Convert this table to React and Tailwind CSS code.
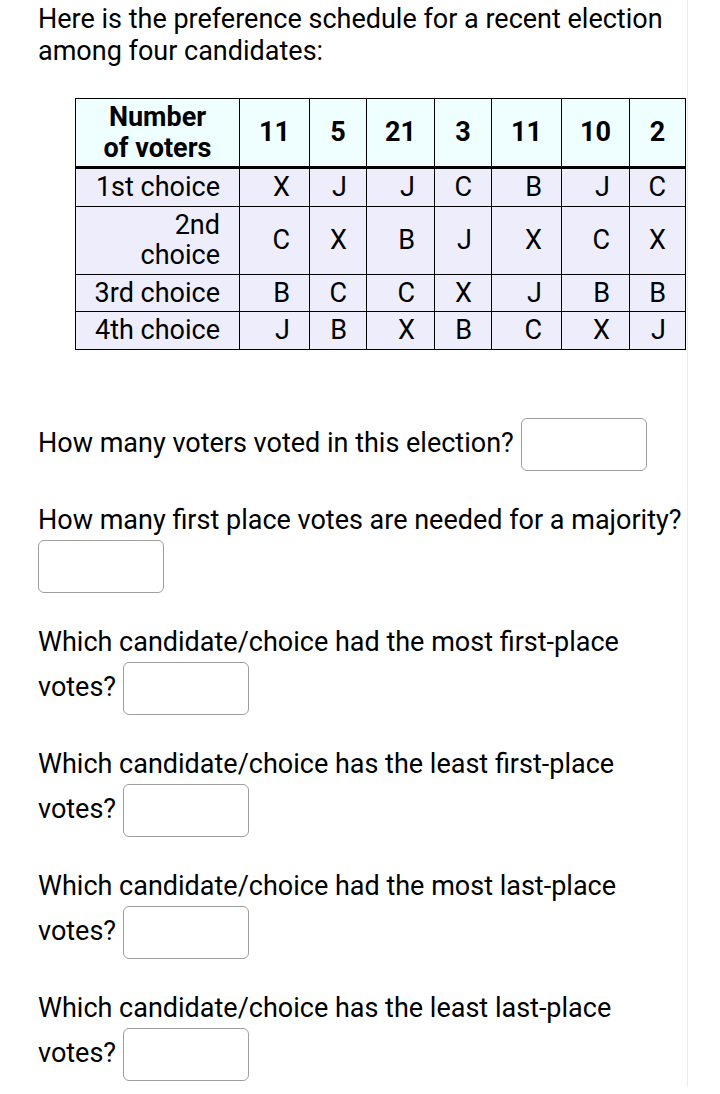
const header = ["11", "5", "21", "3", "11", "10", "2"]
const widths = ["w-[70px]", "w-[57px]", "w-[68px]", "w-[57px]", "w-[70px]", "w-[68px]", "w-[56px]"]

const rows = [
  { label: "1st choice", cells: ["X", "J", "J", "C", "B", "J", "C"] },
  { label: "2nd choice", wrap: true, cells: ["C", "X", "B", "J", "X", "C", "X"] },
  { label: "3rd choice", cells: ["B", "C", "C", "X", "J", "B", "B"] },
  { label: "4th choice", cells: ["J", "B", "X", "B", "C", "X", "J"] },
]

function AnswerBox() {
  return (
    <input
      type="text"
      className="inline-block align-middle w-[126px] h-[53px] my-1 border border-[#9e9e9e] rounded-[6px] bg-white"
    />
  )
}

function Question({ children, className = "" }) {
  return (
    <p className={`leading-[32px] ${className}`}>
      {children} <AnswerBox />
    </p>
  )
}

export default function App() {
  return (
    <div
      className="w-[688px] border-r border-[#ececec] pl-[38px] pb-[2px] text-[27px] text-black bg-white"
      style={{ fontFamily: "Roboto, 'Noto Sans', sans-serif" }}
    >
      <p className="pt-[3px] leading-[32px]">
        Here is the preference schedule for a recent election among four candidates:
      </p>

      {/* Preference schedule */}
      <table className="mt-[31px] ml-[37px] border-collapse table-fixed w-[611px] leading-[30.5px]">
        <thead>
          <tr className="bg-[#effefe]">
            <th className="w-[164px] border border-black border-b-[3px] px-1 py-[3px] text-center font-bold">
              Number
              <br />
              of voters
            </th>
            {header.map((n, i) => (
              <th
                key={i}
                className={`${widths[i]} border border-black border-b-[3px] py-[3px] text-center font-bold`}
              >
                {n}
              </th>
            ))}
          </tr>
        </thead>
        <tbody>
          {rows.map((row) => (
            <tr key={row.label} className="bg-[#ededfb]">
              <td className="border border-black pr-[19px] py-[3px] text-right align-middle whitespace-nowrap">
                {row.wrap ? (
                  <>
                    2nd
                    <br />
                    choice
                  </>
                ) : (
                  row.label
                )}
              </td>
              {row.cells.map((c, i) => (
                <td key={i} className="border border-black pr-[19px] py-[3px] text-right align-middle">
                  {c}
                </td>
              ))}
            </tr>
          ))}
        </tbody>
      </table>

      <Question className="mt-[64px]">How many voters voted in this election?</Question>
      <Question className="mt-[29px]">How many first place votes are needed for a majority?</Question>
      <Question className="mt-[29px]">Which candidate/choice had the most first-place votes?</Question>
      <Question className="mt-[29px]">Which candidate/choice has the least first-place votes?</Question>
      <Question className="mt-[29px]">Which candidate/choice had the most last-place votes?</Question>
      <Question className="mt-[29px]">Which candidate/choice has the least last-place votes?</Question>
    </div>
  )
}
